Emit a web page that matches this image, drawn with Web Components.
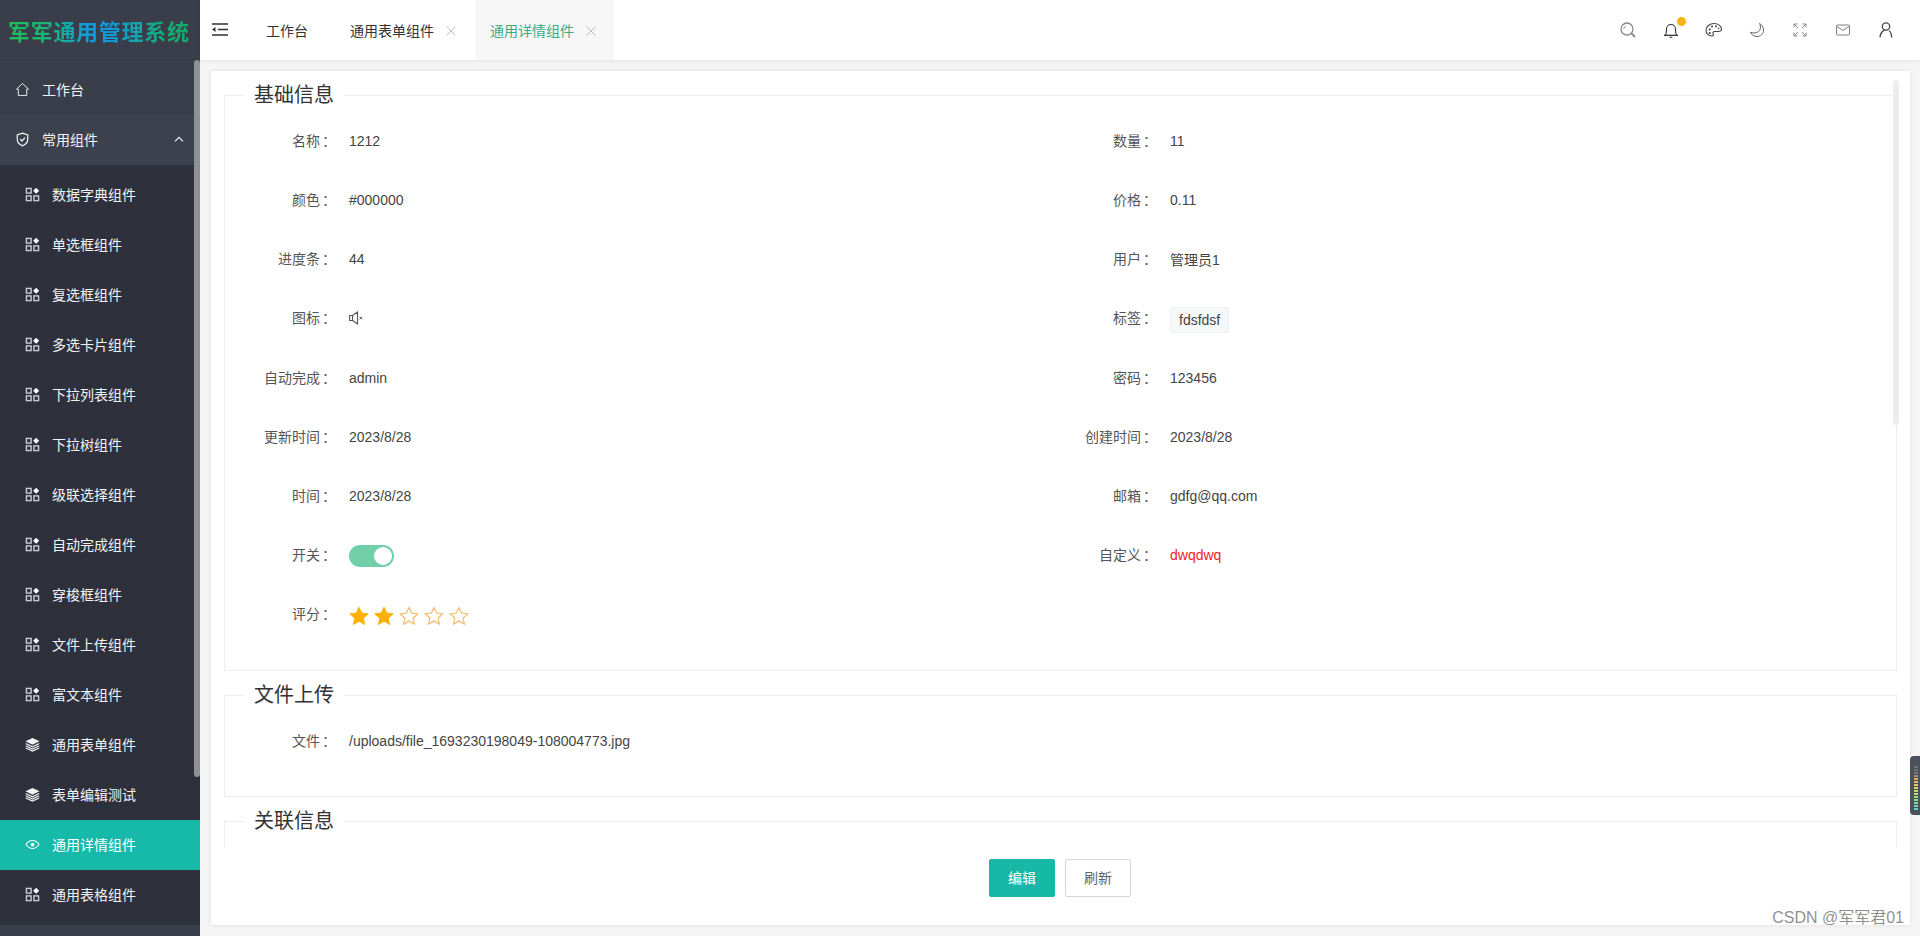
<!DOCTYPE html>
<html lang="zh">
<head>
<meta charset="utf-8">
<title>军军通用管理系统</title>
<style>
  html, body { margin: 0; height: 100%; overflow: hidden; }
  body { font: 14px "Liberation Sans", "Noto Sans CJK SC", sans-serif; color: #333; background: #f5f5f5; }
</style>
</head>
<body>
<app-shell>
  <side-bar slot="side" title="军军通用管理系统">
    <side-item icon="home" label="工作台"></side-item>
    <side-item icon="shield" label="常用组件" group></side-item>
    <side-group>
      <side-item sub icon="grid" label="数据字典组件"></side-item>
      <side-item sub icon="grid" label="单选框组件"></side-item>
      <side-item sub icon="grid" label="复选框组件"></side-item>
      <side-item sub icon="grid" label="多选卡片组件"></side-item>
      <side-item sub icon="grid" label="下拉列表组件"></side-item>
      <side-item sub icon="grid" label="下拉树组件"></side-item>
      <side-item sub icon="grid" label="级联选择组件"></side-item>
      <side-item sub icon="grid" label="自动完成组件"></side-item>
      <side-item sub icon="grid" label="穿梭框组件"></side-item>
      <side-item sub icon="grid" label="文件上传组件"></side-item>
      <side-item sub icon="grid" label="富文本组件"></side-item>
      <side-item sub icon="layers" label="通用表单组件"></side-item>
      <side-item sub icon="layers" label="表单编辑测试"></side-item>
      <side-item sub icon="eye" label="通用详情组件" active></side-item>
      <side-item sub icon="grid" label="通用表格组件"></side-item>
    </side-group>
  </side-bar>

  <top-bar slot="top">
    <nav-tab first>工作台</nav-tab>
    <nav-tab closable>通用表单组件</nav-tab>
    <nav-tab closable active>通用详情组件</nav-tab>
  </top-bar>

  <detail-card>
    <detail-section title="基础信息" pad="27">
      <detail-field label="名称">1212</detail-field>
      <detail-field label="数量">11</detail-field>
      <detail-field label="颜色">#000000</detail-field>
      <detail-field label="价格">0.11</detail-field>
      <detail-field label="进度条">44</detail-field>
      <detail-field label="用户">管理员1</detail-field>
      <detail-field label="图标"><speaker-icon></speaker-icon></detail-field>
      <detail-field label="标签" tall><tag-chip>fdsfdsf</tag-chip></detail-field>
      <detail-field label="自动完成">admin</detail-field>
      <detail-field label="密码">123456</detail-field>
      <detail-field label="更新时间">2023/8/28</detail-field>
      <detail-field label="创建时间">2023/8/28</detail-field>
      <detail-field label="时间">2023/8/28</detail-field>
      <detail-field label="邮箱">gdfg@qq.com</detail-field>
      <detail-field label="开关"><toggle-switch></toggle-switch></detail-field>
      <detail-field label="自定义"><span style="color:#ee1c1c">dwqdwq</span></detail-field>
      <detail-field label="评分"><star-rate value="2"></star-rate></detail-field>
    </detail-section>
    <detail-section title="文件上传" pad="26">
      <detail-field label="文件">/uploads/file_1693230198049-108004773.jpg</detail-field>
    </detail-section>
    <detail-section title="关联信息" pad="60"></detail-section>
    <form-button slot="footer" primary>编辑</form-button>
    <form-button slot="footer">刷新</form-button>
  </detail-card>
</app-shell>

<script>
const ICONS = {
  home: '<path d="M8 1.600l6.400 6h-1.900v6.700h-9V7.600H1.600z" fill="none" stroke="currentColor"/>',
  shield: '<path d="M8 1.200l5.600 1.900v5c0 3.300-2.400 5.400-5.600 6.700-3.200-1.300-5.600-3.400-5.600-6.700v-5z" fill="none" stroke="currentColor" stroke-width="1.300"/><path d="M5.400 7.600l2 2 3.200-3.600" fill="none" stroke="currentColor" stroke-width="1.300"/>',
  grid: '<g fill="none" stroke="#c9cbcf" stroke-width="1.500"><rect x="1.500" y="1.500" width="5" height="5"/><rect x="1.500" y="9.500" width="5" height="5"/><rect x="9.500" y="9.500" width="5" height="5"/></g><path d="M11.900.800l3.200 3.200-3.200 3.200L8.700 4z" fill="#fff"/>',
  layers: '<path d="M8 1l7.500 3.600L8 8.200.5 4.600z" fill="currentColor"/><path d="M.8 7l7.200 3.400L15.200 7M.8 9.400L8 12.800l7.200-3.400M.8 11.700L8 15l7.200-3.300" fill="none" stroke="currentColor" stroke-width="1.300"/>',
  eye: '<path d="M1 8c2-2.900 4.400-4.200 7-4.200S13 5.100 15 8c-2 2.900-4.400 4.200-7 4.200S3 10.900 1 8z" fill="none" stroke="currentColor" stroke-width="1.100"/><circle cx="8" cy="8" r="2" fill="currentColor"/>',
};

class AppShell extends HTMLElement {
  constructor() {
    super();
    this.attachShadow({ mode: "open" });
  }
  connectedCallback() {
    this.shadowRoot.innerHTML = `
      <style>
        :host { display: flex; width: 1920px; height: 936px; overflow: hidden; position: relative; }
        .right { flex: 1; display: flex; flex-direction: column; min-width: 0; }
        main { flex: 1; display: flex; padding: 11px 10px 11px 11px; min-height: 0; }
        .mark {
          position: absolute; right: 16px; bottom: 8px; font-size: 16px; line-height: 20px;
          color: rgba(105, 105, 105, .75);
        }
        .dock {
          position: absolute; right: 0; top: 756px; width: 10px; height: 59px; box-sizing: border-box;
          padding: 9px 2px 5px 4px; background: #4b515b; border-radius: 4px 0 0 4px;
        }
        .dock i {
          display: block; height: 100%;
          background:
            repeating-linear-gradient(#4b515b 0 1px, transparent 1px 3px),
            linear-gradient(#6d7178 0%, #6d7178 18%, #e0a860 30%, #e5d768 50%, #9fdc7c 70%, #58d5c0 100%);
        }
      </style>
      <slot name="side"></slot>
      <div class="right">
        <slot name="top"></slot>
        <main><slot></slot></main>
      </div>
      <div class="dock"><i></i></div>
      <div class="mark">CSDN @军军君01</div>
    `;
  }
}
customElements.define("app-shell", AppShell);

class SideBar extends HTMLElement {
  constructor() {
    super();
    this.attachShadow({ mode: "open" });
  }
  connectedCallback() {
    const title = this.getAttribute("title") || "";
    this.removeAttribute("title");
    this.shadowRoot.innerHTML = `
      <style>
        :host { display: flex; flex-direction: column; flex: none; width: 200px; height: 936px; overflow: hidden; position: relative; background: #3a3e4a; }
        .logo { flex: none; height: 59px; margin-bottom: 5px; display: flex; align-items: center; padding-left: 8px; border-bottom: 1px solid #363a45; }
        .logo span {
          font-size: 22px; font-weight: 700; letter-spacing: .7px; white-space: nowrap;
          background: linear-gradient(90deg, #1fbb5f 0%, #1cb86c 17%, #14ad9c 30%, #119ae0 46%, #1199d6 58%, #16a6a8 72%, #17ab74 86%, #15aa6c 100%);
          -webkit-background-clip: text; background-clip: text; color: transparent;
        }
        .thumb { position: absolute; right: 0; top: 60px; width: 6px; height: 717px; background: #8f9196; border-radius: 3px; }
      </style>
      <div class="logo"><span>${title}</span></div>
      <slot></slot>
      <div class="thumb"></div>
    `;
  }
}
customElements.define("side-bar", SideBar);

class SideGroup extends HTMLElement {
  constructor() {
    super();
    this.attachShadow({ mode: "open" });
    this.shadowRoot.innerHTML = `
      <style>:host { display: block; flex: none; padding: 5px 0; background: #2e313b; }</style>
      <slot></slot>
    `;
  }
}
customElements.define("side-group", SideGroup);

class SideItem extends HTMLElement {
  constructor() {
    super();
    this.attachShadow({ mode: "open" });
  }
  connectedCallback() {
    const icon = this.getAttribute("icon");
    const label = this.getAttribute("label");
    const sub = this.hasAttribute("sub");
    const group = this.hasAttribute("group");
    this.shadowRoot.innerHTML = `
      <style>
        :host { display: flex; align-items: center; box-sizing: border-box; height: 50px; padding: 0 0 2px ${sub ? 25 : 15}px; color: #f2f3f5; flex: none; }
        :host([group]) { background: #3d414d; }
        :host([active]) { background: #17b9a8; color: #fff; }
        svg.ic { width: 15px; height: 15px; margin-right: 12px; flex: none; }
        .arrow { position: absolute; left: 174px; width: 10px; height: 6px; }
      </style>
      <svg class="ic" viewBox="0 0 16 16">${ICONS[icon]}</svg>
      <span>${label}</span>
      ${group ? '<svg class="arrow" viewBox="0 0 10 6"><path d="M1 5.300l4-4 4 4" fill="none" stroke="currentColor" stroke-width="1.200"/></svg>' : ""}
    `;
  }
}
customElements.define("side-item", SideItem);

class TopBar extends HTMLElement {
  constructor() {
    super();
    this.attachShadow({ mode: "open" });
    this.shadowRoot.innerHTML = `
      <style>
        :host { display: flex; align-items: stretch; flex: none; height: 60px; background: #fff; box-shadow: 0 1px 4px rgba(0,0,0,.08); position: relative; }
        .menu { width: 16px; height: 13px; margin: 23px 23px 0 12px; flex: none; }
        .tabs { display: flex; flex: 1; }
        .tools { display: flex; align-items: center; padding-right: 13px; }
        .tool { position: relative; width: 43px; display: flex; justify-content: center; color: #555; }
        .tool svg { width: 18px; height: 18px; }
        .dot { position: absolute; left: 28px; top: -4px; width: 9px; height: 9px; border-radius: 50%; background: #fbb311; }
      </style>
      <svg class="menu" viewBox="0 0 16 13">
        <path d="M0 1h16M6 6.500h10M0 12h16" stroke="#333" stroke-width="1.500" fill="none"/>
        <path d="M3.500 4v5L0 6.500z" fill="#333"/>
      </svg>
      <div class="tabs"><slot></slot></div>
      <div class="tools">
        <span class="tool"><svg viewBox="0 0 18 18" fill="none" stroke="#8a8a8a"><circle cx="8" cy="8" r="6" stroke-width="1.300"/><path d="M4.800 8a3.200 3.200 0 0 1 2-3" stroke-width="1"/><path d="M12.500 12.500l3.500 3.500" stroke-width="1.800"/></svg></span>
        <span class="tool"><svg viewBox="0 0 18 18" fill="none" stroke="#333" stroke-width="1.100"><path d="M3.500 14c1-1.500 1-3 1-6a4.500 4.500 0 0 1 9 0c0 3 0 4.500 1 6"/><path d="M2 14.300h14" stroke-width="1.300"/><path d="M7.700 16.300h2.600"/></svg><i class="dot"></i></span>
        <span class="tool"><svg viewBox="0 0 18 18" fill="none" stroke="#444" stroke-width="1.100"><path d="M9 2.500c-4.300 0-8 3-8 6.800 0 3.300 2.800 5.700 5.700 5.700 2 0 1.900-1.400 1.400-2.300-.6-1.100.2-2.200 1.600-2.200h3.300c2 0 3.500-.6 3.500-2.200C16.500 4.800 13 2.500 9 2.500z"/><g fill="#444" stroke="none"><circle cx="4.700" cy="8.500" r="1.100"/><circle cx="7" cy="5.500" r="1"/><circle cx="11" cy="5.300" r="1"/><circle cx="4.800" cy="12" r="1.100"/><circle cx="13.500" cy="7.300" r=".8"/></g></svg></span>
        <span class="tool"><svg viewBox="0 0 18 18" fill="none" stroke="#666" stroke-width="1"><path d="M11.500 2.500c1.700 3.500 1 6.300-1 8-2 1.600-5 1.900-8 .8 1.200 2.800 3.800 4.200 6.500 4.200 3.600 0 6.500-2.700 6.500-6.300 0-2.900-1.500-5.300-4-6.700z"/></svg></span>
        <span class="tool"><svg viewBox="0 0 18 18" fill="none" stroke="#888" stroke-width="1"><path d="M3 3l4 4M3 3h3.500M3 3v3.500M15 3l-4 4M15 3h-3.500M15 3v3.500M3 15l4-4M3 15h3.500M3 15v-3.500M15 15l-4-4M15 15h-3.500M15 15v-3.500"/></svg></span>
        <span class="tool"><svg viewBox="0 0 18 18" fill="none" stroke="#808080" stroke-width="1"><rect x="2.500" y="4" width="13" height="10" rx="1"/><path d="M3 5.500l6 4 6-4"/></svg></span>
        <span class="tool"><svg viewBox="0 0 18 18" fill="none" stroke="#444" stroke-width="1.300"><circle cx="9" cy="5.500" r="3.700"/><path d="M3 16.500c.2-3.500 2.200-6.300 4.500-7.400M12 9.800c1.500.8 2.500 3.500 2.700 6.700"/></svg></span>
      </div>
    `;
  }
}
customElements.define("top-bar", TopBar);

class NavTab extends HTMLElement {
  constructor() {
    super();
    this.attachShadow({ mode: "open" });
  }
  connectedCallback() {
    const closable = this.hasAttribute("closable");
    this.shadowRoot.innerHTML = `
      <style>
        :host { display: flex; align-items: center; padding: 0 18px 0 15px; color: #333; background: #fff; }
        :host([first]) { padding-right: 27px; }
        :host(:nth-child(2)) { padding-right: 19px; }
        :host([active]) { color: #36ad85; background: #f7f7f8; }
        svg { width: 10px; height: 10px; margin-left: 12px; margin-top: 1px; }
      </style>
      <slot></slot>
      ${closable ? '<svg viewBox="0 0 10 10"><path d="M.7.700l8.600 8.600M9.300.700L.7 9.300" stroke="#bdbdbd" stroke-width="1"/></svg>' : ""}
    `;
  }
}
customElements.define("nav-tab", NavTab);

class DetailCard extends HTMLElement {
  constructor() {
    super();
    this.attachShadow({ mode: "open" });
    this.shadowRoot.innerHTML = `
      <style>
        :host { display: flex; flex-direction: column; flex: 1; min-width: 0; background: #fff; box-shadow: 0 0 4px rgba(0,0,0,.1); position: relative; }
        .body { height: 776px; flex: none; overflow: hidden; box-sizing: border-box; padding: 12px 13px 0 13px; }
        .foot { flex: 1; display: flex; justify-content: center; align-items: flex-start; gap: 10px; padding-top: 12px; padding-right: 1px; }
        .thumb { position: absolute; left: 1682px; top: 9px; width: 6px; height: 345px; background: #ededed; border-radius: 3px; }
      </style>
      <div class="body"><slot></slot></div>
      <div class="foot"><slot name="footer"></slot></div>
      <div class="thumb"></div>
    `;
  }
}
customElements.define("detail-card", DetailCard);

class DetailSection extends HTMLElement {
  constructor() {
    super();
    this.attachShadow({ mode: "open" });
  }
  connectedCallback() {
    const title = this.getAttribute("title") || "";
    const pad = this.getAttribute("pad") || 26;
    this.removeAttribute("title");
    this.shadowRoot.innerHTML = `
      <style>
        :host { display: block; margin-bottom: 12px; }
        fieldset { margin: 0; padding: 4px 0 ${pad}px; border: 1px solid #ebeef0; min-width: 0; }
        legend { margin-left: 19px; padding: 0 10px; font-size: 20px; line-height: 24px; color: #333; }
        .grid { display: grid; grid-template-columns: 821px 1fr; grid-auto-rows: minmax(59px, auto); }
      </style>
      <fieldset>
        <legend>${title}</legend>
        <div class="grid"><slot></slot></div>
      </fieldset>
    `;
  }
}
customElements.define("detail-section", DetailSection);

class DetailField extends HTMLElement {
  constructor() {
    super();
    this.attachShadow({ mode: "open" });
  }
  connectedCallback() {
    this.shadowRoot.innerHTML = `
      <style>
        :host { display: flex; align-items: center; color: #444; }
        :host([tall]) { min-height: 60px; }
        label { width: 111px; padding: 0 13px 2px 0; text-align: right; color: #555; flex: none; }
        label span { margin-left: 2px; }
        .v { display: flex; align-items: center; }
      </style>
      <label>${this.getAttribute("label")}<span>：</span></label>
      <div class="v"><slot></slot></div>
    `;
  }
}
customElements.define("detail-field", DetailField);

class SpeakerIcon extends HTMLElement {
  constructor() {
    super();
    this.attachShadow({ mode: "open" });
    this.shadowRoot.innerHTML = `
      <style>:host { display: inline-flex; } svg { width: 14px; height: 14px; display: block; }</style>
      <svg viewBox="0 0 14 14" fill="none" stroke="#555" stroke-width="1.100">
        <path d="M.6 4.500h2.900v5H.6zM3.500 4.500L8.500 1v12l-5-3.500"/>
        <path d="M10.500 5.800l2.600 2.600M13.100 5.800l-2.600 2.600" stroke-width="1"/>
      </svg>
    `;
  }
}
customElements.define("speaker-icon", SpeakerIcon);

class TagChip extends HTMLElement {
  constructor() {
    super();
    this.attachShadow({ mode: "open" });
    this.shadowRoot.innerHTML = `
      <style>
        :host { display: inline-block; margin-top: 4px; padding: 0 8px; height: 24px; line-height: 24px; background: #f7f8fa; border: 1px solid #eef0f3; border-radius: 2px; color: #444; }
      </style>
      <slot></slot>
    `;
  }
}
customElements.define("tag-chip", TagChip);

class ToggleSwitch extends HTMLElement {
  constructor() {
    super();
    this.attachShadow({ mode: "open" });
    this.shadowRoot.innerHTML = `
      <style>
        :host { display: flex; justify-content: flex-end; align-items: center; box-sizing: border-box; width: 45px; height: 22px; padding: 2px; margin-top: 3px; background: #71cfaa; border-radius: 11px; }
        i { width: 18px; height: 18px; border-radius: 50%; background: #fff; }
      </style>
      <i></i>
    `;
  }
}
customElements.define("toggle-switch", ToggleSwitch);

class StarRate extends HTMLElement {
  constructor() {
    super();
    this.attachShadow({ mode: "open" });
  }
  connectedCallback() {
    const value = Number(this.getAttribute("value") || 0);
    let stars = "";
    for (let i = 0; i < 5; i++) {
      const on = i < value;
      stars += `<svg viewBox="0 0 20 20"><path d="M10 1.500l2.600 5.600 6.100.7-4.500 4.200 1.200 6.100L10 15l-5.400 3.100 1.200-6.100L1.300 7.800l6.100-.7z" fill="${on ? "#ffb000" : "none"}" stroke="${on ? "#ffb000" : "#f3b763"}" stroke-width="1.100"/></svg>`;
    }
    this.shadowRoot.innerHTML = `
      <style>
        :host { display: flex; gap: 5px; margin-top: 4px; }
        svg { width: 20px; height: 20px; display: block; }
      </style>
      ${stars}
    `;
  }
}
customElements.define("star-rate", StarRate);

class FormButton extends HTMLElement {
  constructor() {
    super();
    this.attachShadow({ mode: "open" });
    this.shadowRoot.innerHTML = `
      <style>
        :host { display: flex; align-items: center; justify-content: center; box-sizing: border-box; width: 66px; height: 38px; padding-bottom: 2px; background: #fff; color: #606266; border: 1px solid #d4d6da; border-radius: 2px; }
        :host([primary]) { background: #17b8a6; border-color: #17b8a6; color: #fff; }
      </style>
      <slot></slot>
    `;
  }
}
customElements.define("form-button", FormButton);
</script>
</body>
</html>
